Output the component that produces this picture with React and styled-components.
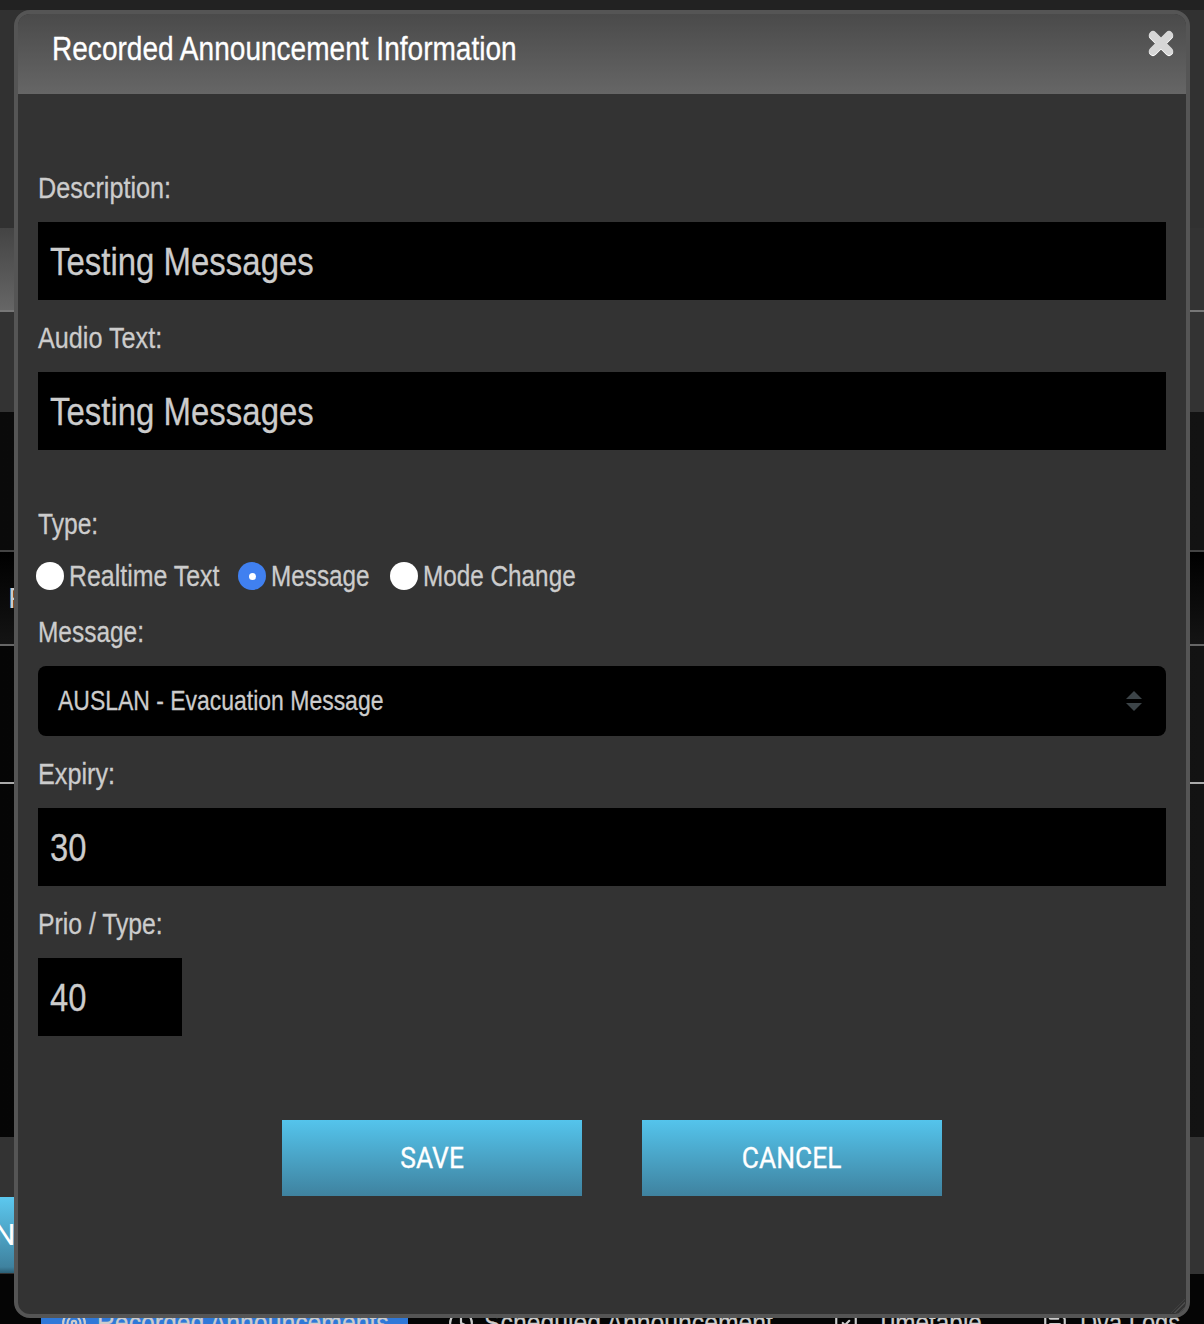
import styled, { createGlobalStyle } from 'styled-components';
import { Radio, Clock, SquareCheck, Save } from 'lucide-react';

const Global = createGlobalStyle`
  html, body { margin: 0; padding: 0; background: #050505; }
  body { width: 1204px; height: 1324px; overflow: hidden; }
`;

const FONT = `"Liberation Sans", Arial, sans-serif`;

const Page = styled.div`
  position: relative;
  width: 1204px;
  height: 1324px;
  overflow: hidden;
  font-family: ${FONT};
`;

// the reference font is a narrow grotesque, none is installed so squeeze Liberation Sans
const Narrow = styled.span`
  display: inline-block;
  flex: none;
  white-space: nowrap;
  width: ${p => (p.$w ? `${p.$w}px` : 'auto')};
  transform: scaleX(${p => p.$scale || 0.84});
  transform-origin: ${p => (p.$center ? 'center' : 'left')};
  -webkit-text-stroke: 0.3px currentColor;
`;

const Band = styled.div`
  height: ${p => p.$h}px;
  background: ${p => p.$bg};
  border-bottom: ${p => (p.$line ? `2px solid ${p.$line}` : 'none')};
  box-sizing: border-box;
  overflow: hidden;
`;

const SideCell = styled.div`
  width: 14px;
  height: 100%;
  background: linear-gradient(#444, #666);
`;

const SideLetter = styled.div`
  padding: 28px 0 0 8px;
  color: #ccc;
  font-size: 30px;
  line-height: 36px;
`;

const SideButton = styled.div`
  width: 14px;
  height: 76px;
  margin-top: 60px;
  overflow: hidden;
  background: linear-gradient(#5cc8ef, #3f829f 92%, #2c5f75);
  color: #fff;
  font-family: Roboto, sans-serif;
  font-size: 30px;
  line-height: 76px;
  text-indent: -6px;
`;

const TabBar = styled.div`
  display: flex;
  gap: 20px;
  height: 51px;
  padding: 39px 0 0 41px;
  box-sizing: border-box;
  background: #050505;
`;

const Tab = styled.div`
  display: flex;
  gap: ${p => p.$gap || 10}px;
  height: 40px;
  padding: 0 20px;
  background: ${p => (p.$active ? '#2f78d8' : 'transparent')};
  color: #ccc;
  font-size: 30px;
  line-height: 20px;
  svg {
    flex: none;
    margin-top: -3px;
  }
`;

const Modal = styled.div`
  position: absolute;
  top: 10px;
  left: 14px;
  width: 1176px;
  height: 1308px;
  box-sizing: border-box;
  display: flex;
  flex-direction: column;
  background: #333;
  border: 4px solid #555;
  border-radius: 16px;
  overflow: hidden;
`;

const Header = styled.div`
  position: relative;
  height: 80px;
  flex: none;
  background: linear-gradient(#4a4a4a, #666);
  padding: 17px 0 0 34px;
  box-sizing: border-box;
  color: #fff;
  font-size: 33px;
  line-height: 36px;
`;

const Close = styled.svg`
  position: absolute;
  top: 15px;
  right: 12px;
  width: 26px;
  height: 28px;
`;

const Form = styled.div`
  padding: 76px 20px 0;
  display: flex;
  flex-direction: column;
`;

const Label = styled.div`
  color: #ccc;
  font-size: 30px;
  line-height: 36px;
  margin-top: ${p => p.$mt || 0}px;
  margin-bottom: 16px;
`;

const Input = styled.div`
  background: #000;
  color: #ccc;
  height: 78px;
  width: ${p => p.$w || 1128}px;
  box-sizing: border-box;
  padding-left: 12px;
  font-size: 39px;
  line-height: 80px;
  margin-bottom: 20px;
  overflow: hidden;
`;

const RadioRow = styled.div`
  display: flex;
  align-items: center;
  gap: 18px;
  height: 36px;
  margin: 0 0 20px -2px;
`;

const RadioItem = styled.label`
  display: flex;
  align-items: center;
  gap: 5px;
  color: #ccc;
  font-size: 30px;
`;

const Dot = styled.span`
  width: 28px;
  height: 28px;
  flex: none;
  border-radius: 50%;
  box-sizing: border-box;
  background: ${p => (p.$on ? '#4080f0' : '#fff')};
  display: flex;
  align-items: center;
  justify-content: center;
  &::after {
    content: '';
    width: 7px;
    height: 7px;
    border-radius: 50%;
    background: ${p => (p.$on ? '#fff' : 'transparent')};
  }
`;

const Select = styled.div`
  position: relative;
  background: #000;
  color: #ccc;
  height: 70px;
  border-radius: 8px;
  padding-left: 20px;
  font-size: 28px;
  line-height: 70px;
  margin-bottom: 20px;
`;

const Arrows = styled.svg`
  position: absolute;
  right: 24px;
  top: 25px;
  width: 16px;
  height: 20px;
`;

const Buttons = styled.div`
  display: flex;
  justify-content: center;
  gap: 60px;
  margin: 64px 0 0 20px;
`;

const Button = styled.div`
  width: 300px;
  height: 76px;
  background: linear-gradient(#54c4ec, #3f829f);
  color: #fff;
  font-family: Roboto, sans-serif;
  font-size: 30px;
  line-height: 76px;
  text-align: center;
`;

const Grip = styled.div`
  position: absolute;
  right: 1px;
  bottom: 1px;
  width: 14px;
  height: 14px;
  background: repeating-linear-gradient(135deg, #4a4a4a 0 1px, transparent 1px 3px);
  clip-path: polygon(100% 0, 100% 100%, 0 100%);
`;

export default function App() {
  return (
    <Page>
      <Global />
      <Band $h={10} $bg="#222" />
      <Band $h={218} $bg="#313131" />
      <Band $h={84} $bg="#333" $line="#777">
        <SideCell />
      </Band>
      <Band $h={100} $bg="#333" />
      <Band $h={140} $bg="linear-gradient(to right, #0a0a0a, #131313)" $line="#444" />
      <Band $h={94} $bg="linear-gradient(#000, #141414)" $line="#666">
        <SideLetter>F</SideLetter>
      </Band>
      <Band $h={138} $bg="linear-gradient(to right, #050505, #131313)" $line="#aaa" />
      <Band $h={353} $bg="linear-gradient(to right, #050505, #131313)" />
      <Band $h={137} $bg="#333">
        <SideButton>N</SideButton>
      </Band>
      <TabBar>
        <Tab $active>
          <Radio size={26} />
          <Narrow $w={291} $scale={0.825}>Recorded Announcements</Narrow>
        </Tab>
        <Tab>
          <Clock size={26} />
          <Narrow $w={289} $scale={0.825}>Scheduled Announcement</Narrow>
        </Tab>
        <Tab $gap={17}>
          <SquareCheck size={26} />
          <Narrow $w={106} $scale={0.81}>Timetable</Narrow>
        </Tab>
        <Tab $gap={12}>
          <Save size={26} />
          <Narrow $w={102} $scale={0.79}>Dva Logs</Narrow>
        </Tab>
      </TabBar>
      <Modal>
        <Header>
          <Narrow $scale={0.85}>Recorded Announcement Information</Narrow>
          <Close viewBox="0 0 26 28">
            <path d="M5 6 L21 22 M21 6 L5 22" stroke="#fff" strokeWidth="8" strokeLinecap="round" transform="translate(0 1)" />
            <path d="M5 6 L21 22 M21 6 L5 22" stroke="#d6d6d6" strokeWidth="8" strokeLinecap="round" />
          </Close>
        </Header>
        <Form>
          <Label><Narrow>Description:</Narrow></Label>
          <Input><Narrow $scale={0.845}>Testing Messages</Narrow></Input>
          <Label><Narrow>Audio Text:</Narrow></Label>
          <Input><Narrow $scale={0.845}>Testing Messages</Narrow></Input>
          <Label $mt={36}><Narrow $scale={0.82}>Type:</Narrow></Label>
          <RadioRow>
            <RadioItem><Dot /><Narrow $w={151} $scale={0.83}>Realtime Text</Narrow></RadioItem>
            <RadioItem><Dot $on /><Narrow $w={101} $scale={0.81}>Message</Narrow></RadioItem>
            <RadioItem><Dot /><Narrow $w={154} $scale={0.81}>Mode Change</Narrow></RadioItem>
          </RadioRow>
          <Label><Narrow $scale={0.815}>Message:</Narrow></Label>
          <Select>
            <Narrow $scale={0.82}>AUSLAN - Evacuation Message</Narrow>
            <Arrows viewBox="0 0 16 20">
              <path d="M8 0 L16 8 H0 Z M8 20 L0 12 H16 Z" fill="#3c4448" />
            </Arrows>
          </Select>
          <Label><Narrow>Expiry:</Narrow></Label>
          <Input><Narrow>30</Narrow></Input>
          <Label><Narrow $scale={0.825}>Prio / Type:</Narrow></Label>
          <Input $w={144}><Narrow>40</Narrow></Input>
          <Buttons>
            <Button><Narrow $center $scale={0.88}>SAVE</Narrow></Button>
            <Button><Narrow $center $scale={0.88}>CANCEL</Narrow></Button>
          </Buttons>
        </Form>
        <Grip />
      </Modal>
    </Page>
  );
}
